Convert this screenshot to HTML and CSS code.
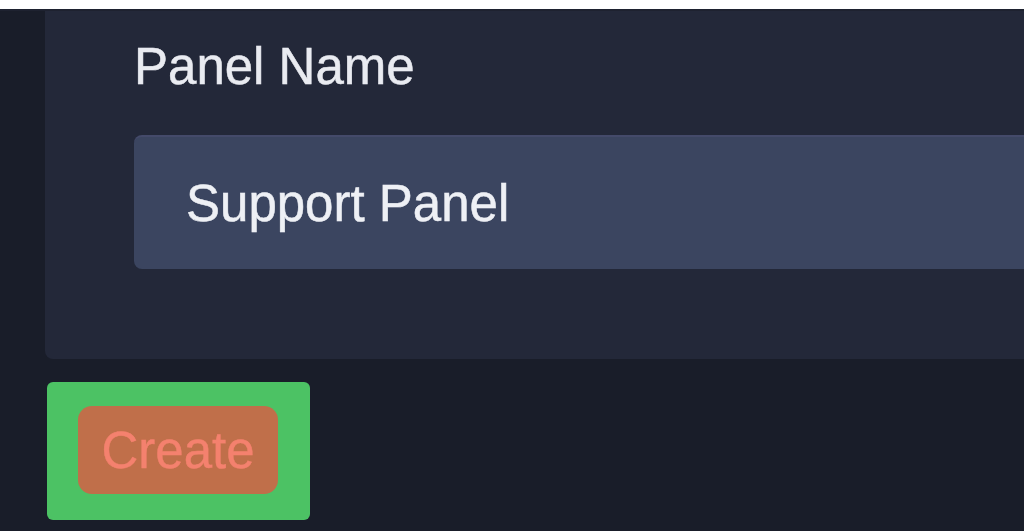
FILE: index.html
```html
<!DOCTYPE html>
<html lang="en">
<head>
    <meta charset="UTF-8">
    <meta name="viewport" content="width=device-width, initial-scale=1.0">
    <title>Create Panel</title>
    <link rel="stylesheet" href="styles.css">
</head>
<body>
    <main class="page">
        <section class="panel">
            <label class="field-label" for="panel-name">Panel Name</label>
            <div class="field-input" id="panel-name">Support Panel</div>
        </section>
        <div class="create-wrap">
            <button class="create-btn">Create</button>
        </div>
    </main>
</body>
</html>
```

FILE: styles.css
```css
body {
    font-family: 'Liberation Sans', Arial, sans-serif;
    background-color: #ffffff;
    margin: 0;
    padding: 0;
    height: 531px;
    overflow: hidden;
}

.page {
    margin-top: 9px;
    height: 522px;
    background-color: #191d29;
    border-top: 2px solid #1e2230;
    box-sizing: border-box;
    padding-left: 45px;
    display: flex;
    flex-direction: column;
    align-items: flex-start;
}

.panel {
    align-self: stretch;
    background-color: #232839;
    border-radius: 0 0 0 8px;
    padding: 26px 0 90px 89px;
    display: flex;
    flex-direction: column;
}

.field-label {
    font-size: 51px;
    color: #e9ebf1;
    line-height: 59px;
    -webkit-text-stroke: 0.5px #e9ebf1;
}

.field-input {
    margin-top: 39px;
    height: 134px;
    background-color: #3b4560;
    border-top: 2px solid #444a6a;
    box-sizing: border-box;
    border-radius: 8px 0 0 8px;
    padding-left: 52px;
    display: flex;
    align-items: center;
    font-size: 51px;
    color: #eef0f5;
    -webkit-text-stroke: 0.5px #eef0f5;
}

.create-wrap {
    margin: 23px 0 0 2px;
    width: 263px;
    height: 138px;
    box-sizing: border-box;
    background-color: #4cc264;
    border-radius: 6px;
    padding: 24px 0 0 31px;
}

.create-btn {
    width: 200px;
    height: 88px;
    border: none;
    border-radius: 14px;
    background-color: #c06f4a;
    color: #f4816e;
    font-family: 'Liberation Sans', Arial, sans-serif;
    font-size: 51px;
    -webkit-text-stroke: 0.4px #f4816e;
    padding: 0;
    cursor: pointer;
}
```
